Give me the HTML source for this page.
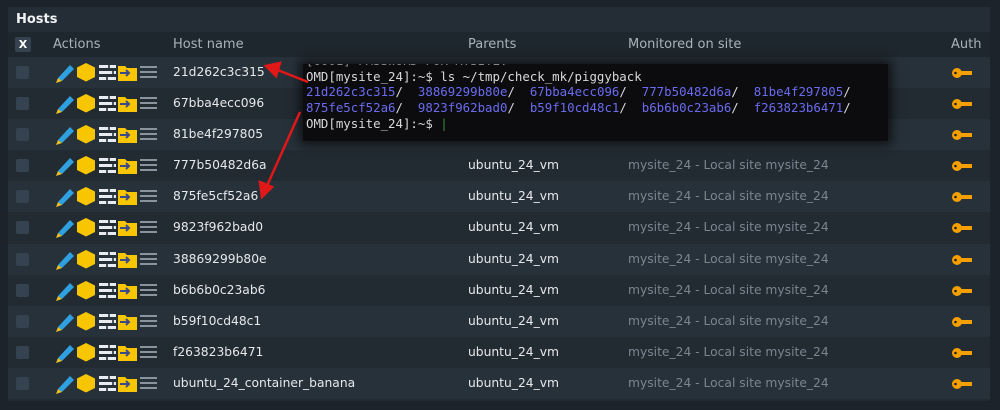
<!DOCTYPE html>
<html><head><style>
*{margin:0;padding:0;box-sizing:border-box}
body{width:1000px;height:410px;background:#1c232a;font-family:"DejaVu Sans","Liberation Sans",sans-serif;color:#e6e9ec;position:relative;overflow:hidden}
.panel{position:absolute;left:8px;top:7px;width:982px;height:394px;background:#222a32}
.title{height:25px;background:#242d35;font-weight:bold;font-size:13px;padding:5px 8px;color:#f0f2f4}
.hdr{position:absolute;top:25px;left:0;width:982px;height:25px;background:#1f272e;font-size:13px;color:#a9b2ba}
.hdr span{position:absolute;top:5px}
.row{position:absolute;left:8px;width:982px;height:31px;font-size:12.3px}
.o{background:#27313a}.e{background:#222a32}
.cb{position:absolute;left:8px;top:9px;width:13px;height:13px;background:#354250;border-radius:2px}
.x{position:absolute;left:7px;top:5px;width:16px;height:15px;background:#354250;border-radius:2px;font-weight:bold;font-size:11px;color:#fff;text-align:center;line-height:15px}
.t{position:absolute;top:8px}
.p{position:absolute;top:8px;left:460px}
.g{position:absolute;top:8px;left:620px;color:#7b8590}
.ic{position:absolute;left:46px;top:5px;width:110px;height:21px}
.key{position:absolute;left:943px;top:10px;width:22px;height:12px}
.term{position:absolute;left:303px;top:64px;width:585px;height:77px;background:#0c0c0e;box-shadow:0 0 10px 4px rgba(0,0,0,.6);font-family:"DejaVu Sans Mono","Liberation Mono",monospace;font-size:12.4px;line-height:15.7px;color:#d8d8d8;padding:0 3px;white-space:pre;overflow:hidden}
.b{color:#6b6bf0}
</style></head><body>
<svg width="0" height="0" style="position:absolute">
<defs>
<g id="icons"><path d="M4 16 L16 3 L20 7 L8 19 Z" fill="#2fa0e0"/><path d="M4 16 L2 21 L8 19Z" fill="#f0c020"/><polygon points="32,1 41,5.5 41,15 32,19.5 23,15 23,5.5" fill="#f7c600"/><g fill="#e8ecf0"><rect x="45" y="3" width="17" height="3"/><rect x="45" y="9" width="17" height="3"/><rect x="45" y="15" width="17" height="3"/></g><g fill="#4a5560"><rect x="54" y="3" width="2" height="3"/><rect x="58" y="9" width="2" height="3"/><rect x="52" y="15" width="2" height="3"/></g><path d="M64 4 h7 l2 2 h10 v13 h-19z" fill="#f7c600"/><path d="M66 11 h9 M72 8 l3 3 -3 3" stroke="#3a4a8a" stroke-width="2" fill="none"/><g fill="#8a949e"><rect x="86" y="4" width="17" height="2"/><rect x="86" y="9" width="17" height="2"/><rect x="86" y="14" width="17" height="2"/></g></g>
<g id="key"><circle cx="6" cy="6" r="5" fill="#f5a000"/><rect x="9" y="4" width="12" height="4" fill="#f5a000"/><circle cx="4.5" cy="6" r="1.3" fill="#222"/></g>
</defs></svg>
<div class="panel">
<div class="title">Hosts</div>
<div class="hdr"><div class="x">X</div><span style="left:45px">Actions</span><span style="left:165px">Host name</span><span style="left:460px">Parents</span><span style="left:620px">Monitored on site</span><span style="left:943px">Auth</span></div>
</div>

<div class="row o" style="top:57px"><div class="cb"></div><svg class="ic"><use href="#icons"/></svg><span class="t" style="left:165px">21d262c3c315</span><svg class="key"><use href="#key"/></svg></div>
<div class="row e" style="top:88px"><div class="cb"></div><svg class="ic"><use href="#icons"/></svg><span class="t" style="left:165px">67bba4ecc096</span><svg class="key"><use href="#key"/></svg></div>
<div class="row o" style="top:119px"><div class="cb"></div><svg class="ic"><use href="#icons"/></svg><span class="t" style="left:165px">81be4f297805</span><span class="p">ubuntu_24_vm</span><span class="g">mysite_24 - Local site mysite_24</span><svg class="key"><use href="#key"/></svg></div>
<div class="row e" style="top:150px"><div class="cb"></div><svg class="ic"><use href="#icons"/></svg><span class="t" style="left:165px">777b50482d6a</span><span class="p">ubuntu_24_vm</span><span class="g">mysite_24 - Local site mysite_24</span><svg class="key"><use href="#key"/></svg></div>
<div class="row o" style="top:181px"><div class="cb"></div><svg class="ic"><use href="#icons"/></svg><span class="t" style="left:165px">875fe5cf52a6</span><span class="p">ubuntu_24_vm</span><span class="g">mysite_24 - Local site mysite_24</span><svg class="key"><use href="#key"/></svg></div>
<div class="row e" style="top:212px"><div class="cb"></div><svg class="ic"><use href="#icons"/></svg><span class="t" style="left:165px">9823f962bad0</span><span class="p">ubuntu_24_vm</span><span class="g">mysite_24 - Local site mysite_24</span><svg class="key"><use href="#key"/></svg></div>
<div class="row o" style="top:244px"><div class="cb"></div><svg class="ic"><use href="#icons"/></svg><span class="t" style="left:165px">38869299b80e</span><span class="p">ubuntu_24_vm</span><span class="g">mysite_24 - Local site mysite_24</span><svg class="key"><use href="#key"/></svg></div>
<div class="row e" style="top:275px"><div class="cb"></div><svg class="ic"><use href="#icons"/></svg><span class="t" style="left:165px">b6b6b0c23ab6</span><span class="p">ubuntu_24_vm</span><span class="g">mysite_24 - Local site mysite_24</span><svg class="key"><use href="#key"/></svg></div>
<div class="row o" style="top:306px"><div class="cb"></div><svg class="ic"><use href="#icons"/></svg><span class="t" style="left:165px">b59f10cd48c1</span><span class="p">ubuntu_24_vm</span><span class="g">mysite_24 - Local site mysite_24</span><svg class="key"><use href="#key"/></svg></div>
<div class="row e" style="top:337px"><div class="cb"></div><svg class="ic"><use href="#icons"/></svg><span class="t" style="left:165px">f263823b6471</span><span class="p">ubuntu_24_vm</span><span class="g">mysite_24 - Local site mysite_24</span><svg class="key"><use href="#key"/></svg></div>
<div class="row o" style="top:368px"><div class="cb"></div><svg class="ic"><use href="#icons"/></svg><span class="t" style="left:165px">ubuntu_24_container_banana</span><span class="p">ubuntu_24_vm</span><span class="g">mysite_24 - Local site mysite_24</span><svg class="key"><use href="#key"/></svg></div>

<div class="term"><div style="margin-top:-11px;color:#888">[0001] PASSWORD FOR MYSITE:</div>OMD[mysite_24]:~$ ls ~/tmp/check_mk/piggyback
<span class="b">21d262c3c315</span>/  <span class="b">38869299b80e</span>/  <span class="b">67bba4ecc096</span>/  <span class="b">777b50482d6a</span>/  <span class="b">81be4f297805</span>/
<span class="b">875fe5cf52a6</span>/  <span class="b">9823f962bad0</span>/  <span class="b">b59f10cd48c1</span>/  <span class="b">b6b6b0c23ab6</span>/  <span class="b">f263823b6471</span>/
OMD[mysite_24]:~$ <span style="color:#3a8a3a">|</span></div>
<svg style="position:absolute;left:0;top:0" width="1000" height="410">
<g stroke="#e01818" stroke-width="2.5" fill="#e01818">
<line x1="308" y1="82" x2="275" y2="69"/><polygon points="266,66 280,63 276,76"/>
<line x1="300" y1="112" x2="266" y2="188"/><polygon points="262,197 260,182 272,187"/>
</g></svg>
</body></html>
